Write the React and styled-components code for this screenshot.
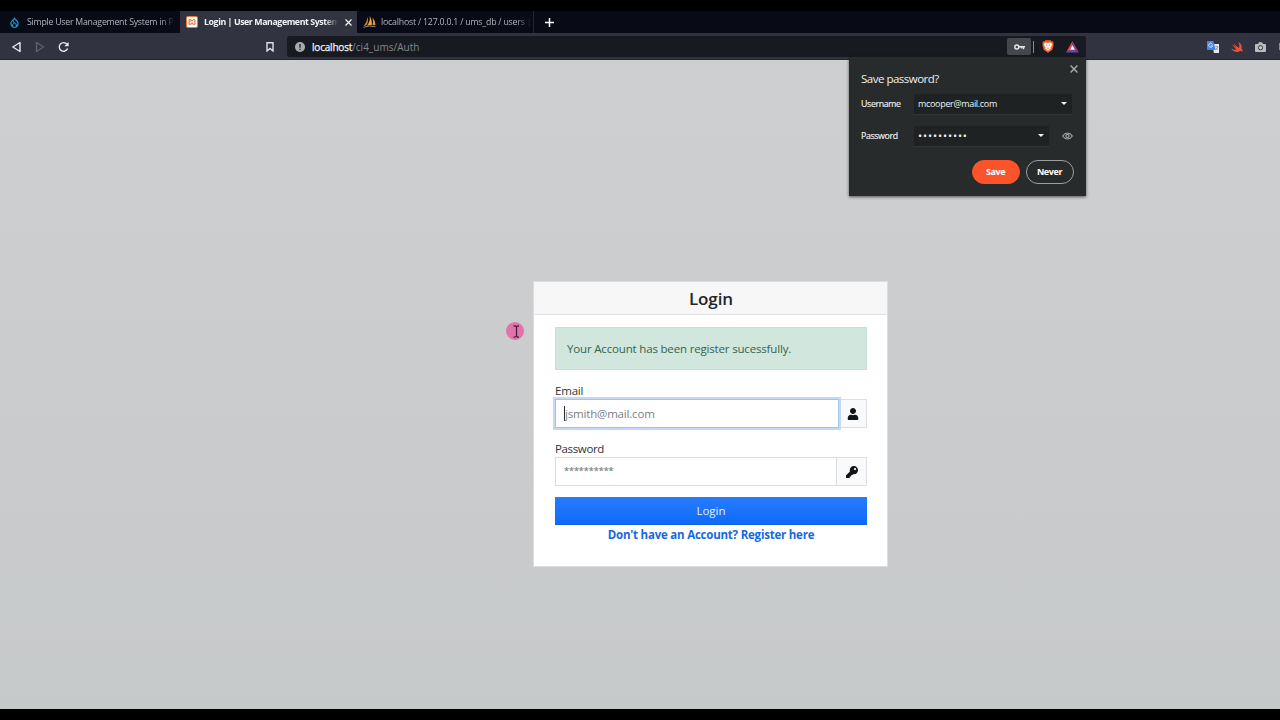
import React from 'react';
import styled, { createGlobalStyle } from 'styled-components';
import { SiDrupal, SiXampp } from 'react-icons/si';
import { FaKey, FaUser } from 'react-icons/fa';

const App = () => {
	return (
		<Screen>
			<GlobalStyle />
			<TabStrip>
				<Tab $width={180} $pad={9}>
					<SiDrupal size={11} color="#1b93c9" />
					<TabTitle $width={148} $gap={7} $spacing={-0.26}>
						Simple User Management System in P
					</TabTitle>
				</Tab>
				<Tab $width={177} $pad={6} $active>
					<XamppBadge>
						<SiXampp size={10} />
					</XamppBadge>
					<TabTitle $width={134} $gap={6} $spacing={-0.42}>
						Login | User Management System
					</TabTitle>
					<CloseIcon $size={7} $left={7} />
				</Tab>
				<Tab $width={177} $pad={6} $divider>
					<SailIcon />
					<TabTitle $width={151} $gap={5} $spacing={-0.22}>
						localhost / 127.0.0.1 / ums_db / users |
					</TabTitle>
				</Tab>
				<NewTab viewBox="0 0 9 9">
					<path d="M4.5 0v9M0 4.5h9" />
				</NewTab>
			</TabStrip>
			<Toolbar>
				<NavIcons />
				<Bookmark viewBox="0 0 8 10">
					<path d="M1 .8h6v8.2L4 6.5 1 9z" />
				</Bookmark>
				<AddressBar>
					<InfoIcon viewBox="0 0 10 10">
						<circle cx="5" cy="5" r="5" fill="#a9abaf" />
						<path d="M5 2v3.8M5 6.8v1.3" stroke="#191c22" strokeWidth="1.3" />
					</InfoIcon>
					<Address>
						<Host>localhost</Host>/ci4_ums/Auth
					</Address>
					<KeyButton>
						<svg width="11" height="6" viewBox="0 0 11 6">
							<circle cx="2.8" cy="3" r="2" fill="none" stroke="#e4e5e7" strokeWidth="1.5" />
							<path d="M4.8 2.7H11M9.5 2.7v2.5M7.5 2.7v1.8" fill="none" stroke="#e4e5e7" strokeWidth="1.4" />
						</svg>
					</KeyButton>
					<AddressDivider />
					<Shield viewBox="0 0 12 13">
						<path d="M3.4.3h5.2l1 1.1 1.2-.2.9 1.9-.4 1.1.3.9-1.400 5L6 12.800 1.800 10.100.4 5.100l.3-.9L.3 3.100l.9-1.900 1.200.2z" fill="#f4602c" />
						<path d="M3 2.500 6 3l3-.5L10.300 4.400 8.600 7.500l.2 1.100L6 10.800 3.200 8.600l.2-1.100L1.700 4.400z" fill="#fff3ec" />
						<path d="M4 5l1.200.5M8 5l-1.200.5M5.200 8.100l.8.5.8-.5" fill="none" stroke="#f4602c" strokeWidth=".8" />
					</Shield>
					<BatIcon viewBox="0 0 13 12">
						<path d="M6.5 0 0 11.5l4.2-3 2.3-4z" fill="#f04a3e" />
						<path d="M6.5 0 13 11.5l-4.2-3-2.3-4z" fill="#a3328b" />
						<path d="M0 11.5h13l-4.2-3H4.2z" fill="#6848ad" />
						<path d="M6.5 4.3 4 8.7h5z" fill="#fff" />
					</BatIcon>
				</AddressBar>
				<Extensions>
					<TranslateIcon viewBox="0 0 12 12">
						<path d="M5 3h7v9H7z" fill="#e5e8ec" />
						<path d="M0 0h6.5l2 9H0z" fill="#4383ee" />
						<path d="M5.3 3.1a2 2 0 1 0 .3 1.7H3.8" fill="none" stroke="#dce8ff" strokeWidth=".9" />
						<path d="M8 5.7h3.3M9.7 4.8v1M10.8 6c-.4 1.5-1.5 2.5-2.5 3M8.8 7l2 2" fill="none" stroke="#68738a" strokeWidth=".6" />
					</TranslateIcon>
					<SwiftIcon viewBox="0 0 12 12">
						<path d="M7.3.8C10.200 2.800 11.200 5.500 10.500 7.600c1.300 1.500 1.200 2.900.9 3.500-.7-1-1.700-1.200-2.500-.8C5.500 11.800 2 10.600.1 7.500c2.200 1.400 4 1.500 5.200.9C3.600 6.800 2 4.800 1.100 3.100c1.700 1.500 3.200 2.800 4.500 3.500C4.500 5.200 3.500 3.700 2.800 2.400c1.800 1.800 3.900 3.700 5.300 4.500.5-2 .2-4.100-.8-6.100z" />
					</SwiftIcon>
					<CameraIcon viewBox="0 0 11 10">
						<path d="M1 2h2l1-1.8h3L8 2h2a1 1 0 0 1 1 1v6a1 1 0 0 1-1 1H1a1 1 0 0 1-1-1V3a1 1 0 0 1 1-1z" fill="#b9bbbd" />
						<circle cx="5.5" cy="5.7" r="2.1" fill="#c6c8ca" stroke="#34363c" strokeWidth="1" />
					</CameraIcon>
					<CutIcon />
				</Extensions>
			</Toolbar>
			<Page>
				<LoginCard>
					<CardHeader>Login</CardHeader>
					<CardBody>
						<Alert>Your Account has been register sucessfully.</Alert>
						<Label $spacing={-0.2}>Email</Label>
						<InputGroup>
							<Field $focused>
								<Caret />
								<Placeholder>jsmith@mail.com</Placeholder>
							</Field>
							<Addon>
								<FaUser size={12} />
							</Addon>
						</InputGroup>
						<Label $spacing={-0.35}>Password</Label>
						<InputGroup>
							<Field>
								<Stars>**********</Stars>
							</Field>
							<Addon>
								<FaKey size={12} />
							</Addon>
						</InputGroup>
						<LoginButton>Login</LoginButton>
						<RegisterLink>Don't have an Account? Register here</RegisterLink>
					</CardBody>
				</LoginCard>
				<SavePassword />
				<Pointer viewBox="0 0 20 20">
					<circle cx="9" cy="10" r="9" fill="#e273aa" />
					<path d="M7.5 4.8q2.5 0 3 1 .5-1 2.5-1M7.5 16.2q2.5 0 3-1 .5 1 2.5 1M10.5 5.5v10" fill="none" stroke="#46182f" strokeWidth="1.2" />
				</Pointer>
			</Page>
		</Screen>
	);
};

const SavePassword = () => (
	<Popup>
		<PopupHead>
			<PopupTitle>Save password?</PopupTitle>
			<CloseIcon $size={8} $color="#a9acac" $left={0} />
		</PopupHead>
		<PopupRow>
			<PopupLabel>Username</PopupLabel>
			<PopupSelect $width={158}>
				mcooper@mail.com
				<Arrow />
			</PopupSelect>
		</PopupRow>
		<PopupRow>
			<PopupLabel>Password</PopupLabel>
			<PopupSelect $width={135}>
				<Dots>••••••••••</Dots>
				<Arrow />
			</PopupSelect>
			<EyeIcon viewBox="0 0 12 8">
				<path d="M.7 4Q3 .7 6 .7T11.3 4Q9 7.3 6 7.3T.7 4z" fill="none" stroke="#a1a4a4" strokeWidth="1.3" />
				<circle cx="6" cy="4" r="1.7" fill="none" stroke="#a1a4a4" strokeWidth="1.3" />
			</EyeIcon>
		</PopupRow>
		<PopupActions>
			<PopupButton $primary>Save</PopupButton>
			<PopupButton>Never</PopupButton>
		</PopupActions>
	</Popup>
);

const CloseIcon = ({ $size, $left, $color = '#f1f1f3' }) => (
	<CloseSvg viewBox="0 0 8 8" $size={$size} $left={$left}>
		<path d="M.6.6l6.8 6.8M7.4.6L.6 7.4" stroke={$color} strokeWidth="1.4" />
	</CloseSvg>
);

const SailIcon = () => (
	<Sail viewBox="0 0 13 12">
		<path d="M4.5 1Q6 6 3 9.5L.8 10Q4 6 4.5 1z" fill="#c9862c" />
		<path d="M6.7 0Q9.5 5 8.8 9L3.8 9.5Q7.5 6 6.7 0z" fill="#f4a032" />
		<path d="M9.5 1.5Q12.5 5 12.5 9L9.5 9.2Q10.5 6 9.5 1.5z" fill="#e59736" />
		<path d="M.5 11.3Q6 9 12.5 10.7" fill="none" stroke="#8d8791" strokeWidth="1" />
	</Sail>
);

const NavIcons = () => (
	<NavGroup viewBox="0 0 58 12">
		<path d="M8 1.5v9L.8 6z" stroke="#e8e9ec" />
		<path d="M24.5 1.5v9l7-4.5z" stroke="#5e6069" />
		<path d="M55 3.3A4.3 4.3 0 1 0 55.6 7.5" stroke="#e8e9ec" />
		<path d="M56.6.9v4.3h-4.300z" fill="#e8e9ec" stroke="none" />
	</NavGroup>
);

export default App;

const GlobalStyle = createGlobalStyle`
	* {
		box-sizing: border-box;
	}
	body {
		margin: 0;
		background: #000;
		overflow: hidden;
	}
	svg {
		display: block;
		flex: none;
	}
`;

const Screen = styled.div`
	width: 1280px;
	height: 720px;
	padding: 11px 0;
	display: flex;
	flex-direction: column;
	background: #000;
	font-family: 'Open Sans', 'Noto Sans', sans-serif;
	white-space: nowrap;
	overflow: hidden;
`;

const TabStrip = styled.div`
	height: 22px;
	flex: none;
	display: flex;
	align-items: center;
	background: #080a16;
`;

const Tab = styled.div`
	width: ${(props) => props.$width}px;
	height: 22px;
	display: flex;
	align-items: center;
	padding-left: ${(props) => props.$pad}px;
	background: ${(props) => (props.$active ? '#313340' : 'transparent')};
	color: ${(props) => (props.$active ? '#f5f5f7' : '#b2b4bb')};
	font-weight: ${(props) => (props.$active ? 700 : 400)};
	border-right: ${(props) => (props.$divider ? '1px solid #242631' : 'none')};
`;

const TabTitle = styled.span`
	width: ${(props) => props.$width}px;
	flex: none;
	margin-left: ${(props) => props.$gap}px;
	font-size: 8.8px;
	line-height: 14px;
	letter-spacing: ${(props) => props.$spacing}px;
	mask-image: linear-gradient(to right, #000 90%, transparent);
`;

const XamppBadge = styled.span`
	width: 12px;
	height: 12px;
	display: flex;
	align-items: center;
	justify-content: center;
	border-radius: 2px;
	background: #e9793a;
	color: #fff;
`;

const CloseSvg = styled.svg`
	width: ${(props) => props.$size}px;
	height: ${(props) => props.$size}px;
	margin-left: ${(props) => props.$left}px;
`;

const Sail = styled.svg`
	width: 13px;
	height: 12px;
`;

const NewTab = styled.svg`
	width: 9px;
	height: 9px;
	margin-left: 11px;
	stroke: #fff;
	stroke-width: 1.5;
`;

const Toolbar = styled.div`
	height: 27px;
	flex: none;
	display: flex;
	align-items: center;
	padding: 1px 0 0 12px;
	background: #313340;
	border-bottom: 1px solid #25272f;
`;

const NavGroup = styled.svg`
	width: 58px;
	height: 12px;
	fill: none;
	stroke-width: 1.4;
	stroke-linejoin: round;
`;

const Bookmark = styled.svg`
	width: 8px;
	height: 10px;
	margin-left: 196px;
	fill: none;
	stroke: #dfe0e4;
	stroke-width: 1.4;
`;

const AddressBar = styled.div`
	width: 799px;
	height: 21px;
	flex: none;
	margin-left: 13px;
	padding-left: 8px;
	display: flex;
	align-items: center;
	background: #171a20;
	border-radius: 2px;
`;

const InfoIcon = styled.svg`
	width: 10px;
	height: 10px;
`;

const Address = styled.div`
	width: 695px;
	margin-left: 7px;
	font-size: 10px;
	line-height: 16px;
	letter-spacing: 0.02px;
	color: #85878c;
`;

const Host = styled.span`
	letter-spacing: -0.2px;
	color: #f4f4f5;
	-webkit-text-stroke: 0.25px #f4f4f5;
`;

const KeyButton = styled.div`
	width: 24px;
	height: 17px;
	display: flex;
	align-items: center;
	justify-content: center;
	border-radius: 2px;
	background: #45474d;
`;

const AddressDivider = styled.span`
	width: 1px;
	height: 12px;
	margin-left: 2px;
	background: #8b8c91;
`;

const Shield = styled.svg`
	width: 12px;
	height: 13px;
	margin-left: 8px;
`;

const BatIcon = styled.svg`
	width: 13px;
	height: 12px;
	margin-left: 12px;
`;

const Extensions = styled.div`
	display: flex;
	align-items: center;
	gap: 12px;
	margin-left: 121px;
`;

const TranslateIcon = styled.svg`
	width: 12px;
	height: 12px;
`;

const SwiftIcon = styled.svg`
	width: 12px;
	height: 12px;
	fill: #ef5138;
`;

const CameraIcon = styled.svg`
	width: 11px;
	height: 10px;
`;

const CutIcon = styled.span`
	width: 1px;
	height: 7px;
	margin-left: 1px;
	background: #8a8c96;
`;

const Page = styled.main`
	position: relative;
	height: 649px;
	padding: 221px 0 0 533px;
	background: linear-gradient(#cdcfd0, #cbccce 50%, #c6c9c9);
`;

const LoginCard = styled.section`
	width: 355px;
	height: 286px;
	background: #fff;
	border: 1px solid #dcdddf;
`;

const CardHeader = styled.h1`
	height: 33px;
	margin: 0;
	padding-left: 1px;
	background: #f7f7f8;
	border-bottom: 1px solid #e2e2e4;
	font-size: 17px;
	line-height: 33px;
	font-weight: 600;
	letter-spacing: -0.1px;
	text-align: center;
	color: #212529;
`;

const CardBody = styled.div`
	padding: 12px 20px 0 21px;
	color: #303438;
`;

const Alert = styled.div`
	height: 43px;
	padding-left: 11px;
	border: 1px solid #c9e1d5;
	background: #d1e7dd;
	color: #36634e;
	font-size: 11.5px;
	line-height: 41px;
	letter-spacing: -0.17px;
`;

const Label = styled.div`
	height: 17px;
	margin-top: 12px;
	font-size: 11.5px;
	line-height: 17px;
	letter-spacing: ${(props) => props.$spacing}px;
`;

const InputGroup = styled.div`
	height: 29px;
	display: flex;
`;

const Field = styled.div`
	width: ${(props) => (props.$focused ? 284 : 282)}px;
	padding-left: 8px;
	position: relative;
	z-index: ${(props) => (props.$focused ? 1 : 0)};
	display: flex;
	align-items: center;
	background: #fff;
	border: 1px solid ${(props) => (props.$focused ? '#a4c3ef' : '#d9dce0')};
	box-shadow: ${(props) => (props.$focused ? '0 0 0 2px #c4d8f8' : 'none')};
	color: #7b8086;
	font-size: 11.5px;
`;

const Caret = styled.span`
	width: 1px;
	height: 15px;
	background: #26292c;
`;

const Placeholder = styled.span`
	letter-spacing: -0.18px;
`;

const Stars = styled.span`
	padding-bottom: 2px;
	font-size: 9px;
	-webkit-text-stroke: 0.2px #7b8086;
`;

const Addon = styled.div`
	flex: 1;
	display: flex;
	align-items: center;
	justify-content: center;
	background: #f9fafb;
	border: 1px solid #dcdfe3;
	border-left: none;
	color: #111418;
`;

const LoginButton = styled.button`
	display: block;
	width: 100%;
	height: 28px;
	margin-top: 11px;
	padding: 1px 0 0;
	border: none;
	border-bottom: 1px solid #1460da;
	background: linear-gradient(#287bfd, #0d6bfa);
	color: #e6f0ff;
	font-family: inherit;
	font-size: 11.5px;
	line-height: 26px;
`;

const RegisterLink = styled.div`
	height: 20px;
	font-size: 11.5px;
	line-height: 19px;
	font-weight: 700;
	letter-spacing: -0.22px;
	text-align: center;
	color: #1569df;
`;

const Popup = styled.aside`
	position: absolute;
	top: -3px;
	left: 849px;
	width: 237px;
	height: 139px;
	padding: 6px 12px 0 12px;
	background: #272b2b;
	box-shadow: 0 1px 3px rgba(0, 0, 0, 0.6);
	color: #eff0f0;
	font-size: 9px;
`;

const PopupHead = styled.div`
	height: 30px;
	display: flex;
	justify-content: space-between;
	margin-right: -4px;
	padding-top: 2px;
`;

const PopupTitle = styled.div`
	padding-top: 6px;
	font-size: 11.5px;
	line-height: 16px;
	letter-spacing: -0.5px;
`;

const PopupRow = styled.div`
	height: 22px;
	margin-bottom: 10px;
	display: flex;
	align-items: center;
`;

const PopupLabel = styled.span`
	width: 53px;
	font-size: 8.8px;
	letter-spacing: -0.36px;
	-webkit-text-stroke: 0.15px #eff0f0;
`;

const PopupSelect = styled.div`
	width: ${(props) => props.$width}px;
	height: 21px;
	padding: 0 5px 0 4px;
	display: flex;
	align-items: center;
	justify-content: space-between;
	background: #1e2222;
	border-bottom: 1px solid #303434;
	letter-spacing: -0.32px;
`;

const Dots = styled.span`
	font-size: 11px;
	letter-spacing: 0.85px;
`;

const Arrow = styled.span`
	border: 3px solid transparent;
	border-top-color: #f1f1f1;
	border-bottom: none;
`;

const EyeIcon = styled.svg`
	width: 11px;
	height: 8px;
	margin-left: 13px;
`;

const PopupActions = styled.div`
	display: flex;
	justify-content: flex-end;
	gap: 6px;
	margin-top: 13px;
`;

const PopupButton = styled.button`
	width: 48px;
	height: 24px;
	padding: 0 1px 1px 0;
	border: 1px solid ${(props) => (props.$primary ? '#fb542b' : '#9c9fa0')};
	border-radius: 12px;
	background: ${(props) => (props.$primary ? '#fb542b' : 'transparent')};
	color: #fff;
	font-family: inherit;
	font-size: 9px;
	font-weight: 700;
	letter-spacing: -0.4px;
`;

const Pointer = styled.svg`
	position: absolute;
	top: 261px;
	left: 506px;
	width: 20px;
	height: 20px;
`;
